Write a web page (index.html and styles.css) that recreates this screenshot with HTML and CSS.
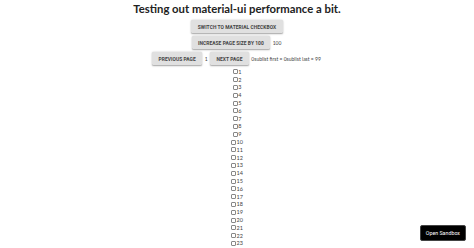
FILE: index.html
```html
<!DOCTYPE html>
<html>
<head>
<meta charset="utf-8">
<link rel="stylesheet" href="styles.css">
</head>
<body>
<div class="app">
  <h1 class="title">Testing out material-ui performance a bit.</h1>
  <div class="row"><button class="btn">Switch to material checkbox</button></div>
  <div class="row"><button class="btn">Increase page size by 100</button><span class="txt">100</span></div>
  <div class="row"><button class="btn">Previous page</button><span class="txt">1</span><button class="btn">Next page</button><span class="txt">0sublist first = 0sublist last = 99</span></div>
  <div class="list">
    <label class="item"><input type="checkbox" class="cb">1</label>
    <label class="item"><input type="checkbox" class="cb">2</label>
    <label class="item"><input type="checkbox" class="cb">3</label>
    <label class="item"><input type="checkbox" class="cb">4</label>
    <label class="item"><input type="checkbox" class="cb">5</label>
    <label class="item"><input type="checkbox" class="cb">6</label>
    <label class="item"><input type="checkbox" class="cb">7</label>
    <label class="item"><input type="checkbox" class="cb">8</label>
    <label class="item"><input type="checkbox" class="cb">9</label>
    <label class="item"><input type="checkbox" class="cb">10</label>
    <label class="item"><input type="checkbox" class="cb">11</label>
    <label class="item"><input type="checkbox" class="cb">12</label>
    <label class="item"><input type="checkbox" class="cb">13</label>
    <label class="item"><input type="checkbox" class="cb">14</label>
    <label class="item"><input type="checkbox" class="cb">15</label>
    <label class="item"><input type="checkbox" class="cb">16</label>
    <label class="item"><input type="checkbox" class="cb">17</label>
    <label class="item"><input type="checkbox" class="cb">18</label>
    <label class="item"><input type="checkbox" class="cb">19</label>
    <label class="item"><input type="checkbox" class="cb">20</label>
    <label class="item"><input type="checkbox" class="cb">21</label>
    <label class="item"><input type="checkbox" class="cb">22</label>
    <label class="item"><input type="checkbox" class="cb">23</label>
  </div>
</div>
<a class="sandbox">Open Sandbox</a>
</body>
</html>
```
FILE: styles.css
```css
html, body {
  margin: 0;
  padding: 0;
  background: #ffffff;
  overflow: hidden;
}
body {
  font-family: Lato, "Liberation Sans", sans-serif;
  color: #222222;
  font-size: 5px;
}
.app {
  display: flex;
  flex-direction: column;
  align-items: center;
}
.title {
  margin: 1px 0 4px;
  font-size: 11.3px;
  line-height: 15px;
  font-weight: 700;
  color: #222222;
}
.row {
  display: flex;
  align-items: center;
  justify-content: center;
  gap: 1.5px;
  margin-bottom: 3px;
}
.btn {
  font-family: Roboto, "Liberation Sans", sans-serif;
  font-weight: 700;
  text-transform: uppercase;
  font-size: 4.9px;
  letter-spacing: 0.05px;
  color: #444444;
  background: #e0e0e0;
  border: 0;
  border-radius: 1.5px;
  height: 13px;
  padding: 0 6.4px;
  box-shadow: 0 0.5px 2px rgba(0,0,0,0.25), 0 1px 1px rgba(0,0,0,0.14);
}
.txt {
  font-size: 5px;
  color: #444444;
  padding: 0 1px;
}
.list {
  display: flex;
  flex-direction: column;
  align-items: center;
}
.item {
  display: flex;
  align-items: center;
  height: 7.8px;
  font-size: 5.5px;
  color: #444444;
}
.cb {
  appearance: none;
  -webkit-appearance: none;
  width: 5px;
  height: 5px;
  margin: 0 0.5px 0 0;
  border: 0.6px solid #888888;
  border-radius: 1px;
  background: #ffffff;
}
.sandbox {
  position: fixed;
  right: 8px;
  bottom: 7px;
  background: #000000;
  color: #ffffff;
  font-family: Roboto, "Liberation Sans", sans-serif;
  font-size: 5.3px;
  border-radius: 2px;
  padding: 0 5px;
  height: 14px;
  line-height: 14px;
  border: 0.5px solid #444;
}
```
